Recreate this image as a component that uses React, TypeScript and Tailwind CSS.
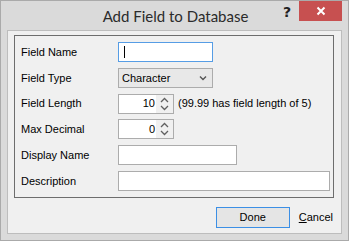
import React from "react";

const font = { fontFamily: '"Liberation Sans", Arial, sans-serif' };

function Spinner({ value }: { value: string }) {
  return (
    <div className="flex h-[20px] w-[56px] border border-[#acacac] bg-white">
      <div className="flex flex-1 items-center justify-end pr-[1px] text-[11px] text-black">{value}</div>
      <div className="flex w-[17px] flex-col items-center justify-center bg-[#f0f0f0]">
        <svg width="9" height="6" viewBox="0 0 9 6" className="mb-[2px]">
          <path d="M1 5 L4.5 1.5 L8 5" fill="none" stroke="#606060" strokeWidth="1.3" />
        </svg>
        <svg width="9" height="6" viewBox="0 0 9 6">
          <path d="M1 1 L4.5 4.5 L8 1" fill="none" stroke="#606060" strokeWidth="1.3" />
        </svg>
      </div>
    </div>
  );
}

function Row({ label, children }: { label: string; children: React.ReactNode }) {
  return (
    <div className="flex h-[20px] items-center">
      <div className="w-[103px] pl-[6px] text-[11px] text-black">{label}</div>
      {children}
    </div>
  );
}

export default function App() {
  return (
    <div className="relative h-[241px] w-[349px] overflow-hidden border border-[#aaaaaa] bg-[#dadada]" style={font}>
      <div className="flex h-[29px] items-start">
        <div className="flex-1 pt-[4px] text-center text-[15px] text-[#2b2b2b]" style={{ fontFamily: 'Lato, "Noto Sans", sans-serif' }}>
          <span className="pl-[2px]">Add Field to Database</span>
        </div>
      </div>
      <div className="absolute left-[282px] top-[1px] text-[14px] font-bold text-[#222]" style={{ fontFamily: '"DejaVu Sans", sans-serif' }}>?</div>
      <div className="absolute right-[6px] top-[-1px] flex h-[21px] w-[43px] items-center justify-center bg-[#c75050]">
        <svg width="10" height="10" viewBox="0 0 10 10">
          <path d="M1.5 1.5 L8.5 8.5 M8.5 1.5 L1.5 8.5" stroke="white" strokeWidth="2" />
        </svg>
      </div>
      <div className="ml-[6px] mr-[6px] h-[204px] border border-[#bdbdbd] bg-[#f0f0f0] pl-[6px] pr-[7px] pt-[4px]">
        <div className="flex h-[163px] flex-col gap-[5.8px] border border-[#6d6d6d] pt-[6px]">
          <Row label="Field Name">
            <div className="relative h-[20px] w-[95px] border border-[#569de5] bg-white">
              <div className="absolute left-[5px] top-[3px] h-[12px] w-[1px] bg-black" />
            </div>
          </Row>
          <Row label="Field Type">
            <div className="flex h-[20px] w-[95px] items-center justify-between border border-[#acacac] bg-[#e8e8e8] pl-[3px] pr-[5px] text-[11px] text-black">
              <span>Character</span>
              <svg width="8" height="6" viewBox="0 0 8 6">
                <path d="M1 1.5 L4 4.5 L7 1.5" fill="none" stroke="#555" strokeWidth="1.4" />
              </svg>
            </div>
          </Row>
          <Row label="Field Length">
            <Spinner value="10" />
            <span className="ml-[4px] text-[11px] text-black">(99.99 has field length of 5)</span>
          </Row>
          <Row label="Max Decimal">
            <Spinner value="0" />
          </Row>
          <Row label="Display Name">
            <div className="h-[20px] w-[119px] border border-[#acacac] bg-white" />
          </Row>
          <Row label="Description">
            <div className="h-[20px] w-[212px] border border-[#acacac] bg-white" />
          </Row>
        </div>
        <div className="mt-[9px] flex items-center justify-end pr-[1px]">
          <div className="flex h-[21px] w-[74px] items-center justify-center border border-[#3c8fe5] bg-[#e5e5e5] text-[11px] text-black">
            Done
          </div>
          <div className="ml-[9px] text-[11px] text-black">
            <span className="underline">C</span>ancel
          </div>
        </div>
      </div>
    </div>
  );
}
